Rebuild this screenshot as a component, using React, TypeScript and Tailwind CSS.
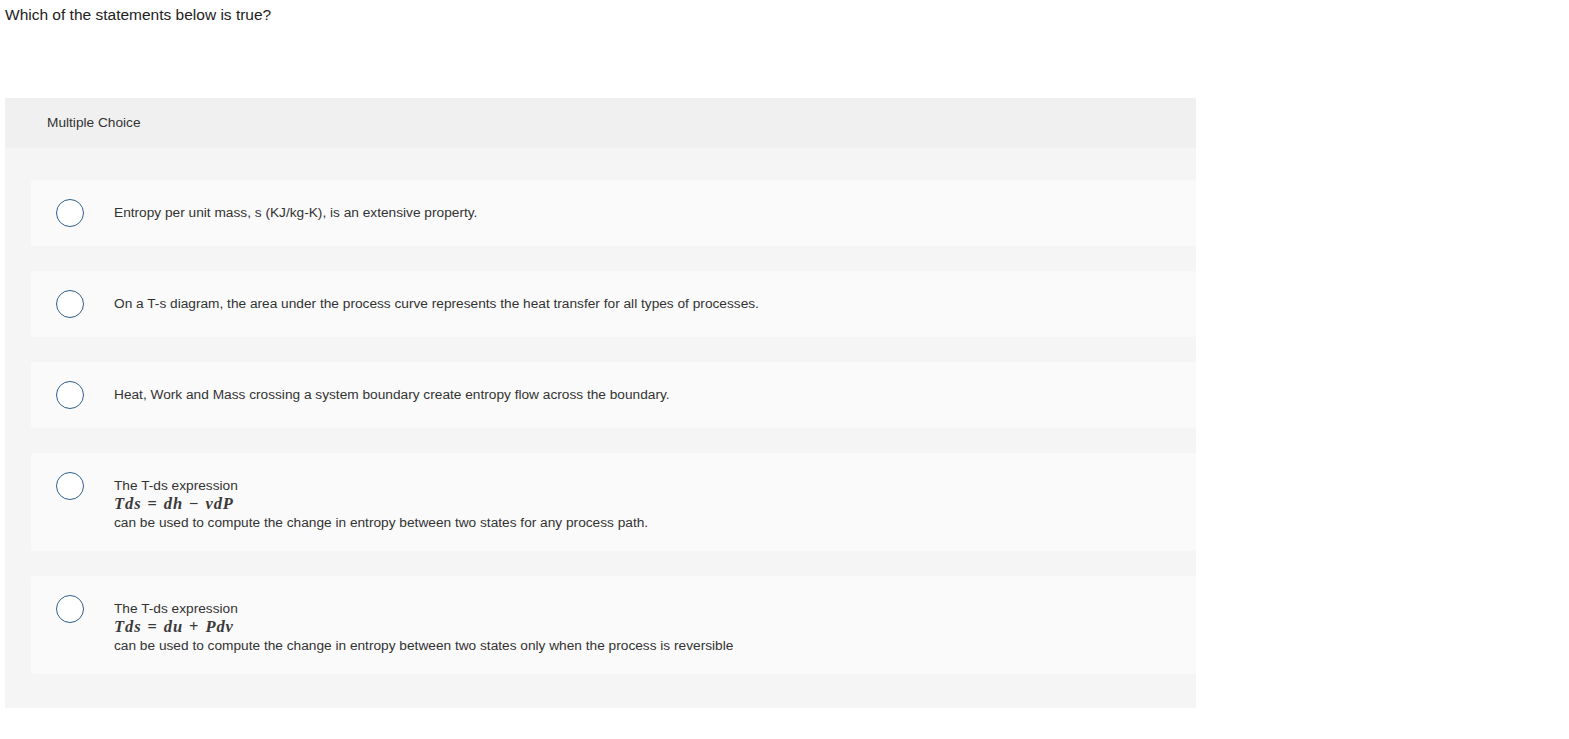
import React from "react";

type Choice = {
  id: number;
  text?: string;
  math?: React.ReactNode;
  after?: string;
};

const sans = "font-['Liberation_Sans',Arial,sans-serif]";

function M({ children }: { children: React.ReactNode }) {
  return <span className="italic">{children}</span>;
}

const choices: Choice[] = [
  { id: 1, text: "Entropy per unit mass, s (KJ/kg-K), is an extensive property." },
  {
    id: 2,
    text: "On a T-s diagram, the area under the process curve represents the heat transfer for all types of processes.",
  },
  { id: 3, text: "Heat, Work and Mass crossing a system boundary create entropy flow across the boundary." },
  {
    id: 4,
    text: "The T-ds expression",
    math: (
      <>
        <M>Tds</M> = <M>dh</M> − <M>vdP</M>
      </>
    ),
    after: "can be used to compute the change in entropy between two states for any process path.",
  },
  {
    id: 5,
    text: "The T-ds expression",
    math: (
      <>
        <M>Tds</M> = <M>du</M> + <M>Pdv</M>
      </>
    ),
    after: "can be used to compute the change in entropy between two states only when the process is reversible",
  },
];

function ChoiceCard({ c }: { c: Choice }) {
  return (
    <div className="flex items-start bg-[#fafafa] rounded-[3px] py-[19px] pl-[25px]">
      <div className="w-7 h-7 shrink-0 rounded-full border-[1.5px] border-[#2f5f8c] bg-white" />
      <div className="ml-[30px] pt-[5px] text-[13.7px] leading-[18px] text-[#333]">
        <div>{c.text}</div>
        {c.math && (
          <div className="font-['Liberation_Serif',serif] font-semibold text-[16.5px] leading-[18px] text-[#3a3a3a] tracking-[0.9px] [word-spacing:1px]">
            {c.math}
          </div>
        )}
        {c.after && <div className="leading-[18px] pt-[1px]">{c.after}</div>}
      </div>
    </div>
  );
}

export default function App() {
  return (
    <div className={`${sans} bg-white min-h-screen text-[#222]`}>
      <div className="pl-[5px] pt-[6px] text-[15.5px] leading-[18px]">Which of the statements below is true?</div>
      <div className="ml-[5px] mt-[74px] w-[1191px] bg-[#f5f5f5]">
        <div className="h-[50px] bg-[#f0f0f0] flex items-center pl-[42px] pt-[1px] text-[13.7px] text-[#333]">
          Multiple Choice
        </div>
        <div className="pl-[26px] pt-[32px] pb-[34px] flex flex-col gap-[25px]">
          {choices.map((c) => (
            <ChoiceCard key={c.id} c={c} />
          ))}
        </div>
      </div>
    </div>
  );
}
